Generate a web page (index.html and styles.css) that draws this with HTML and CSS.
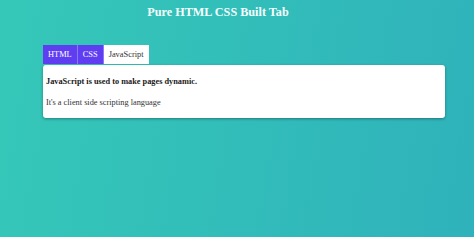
FILE: index.html
```html
<!DOCTYPE html>
<html lang="en">
<head>
  <meta charset="UTF-8" />
  <meta name="viewport" content="width=device-width, initial-scale=1.0" />
  <title>Pure HTML CSS Built Tab</title>
  <link rel="stylesheet" href="styles.css">
</head>
<body>
  <h1 class="titulo">Pure HTML CSS Built Tab</h1>

  <div class="tabs">
    <input type="radio" name="tab" id="tab-html">
    <label for="tab-html">HTML</label>
    <input type="radio" name="tab" id="tab-css">
    <label for="tab-css">CSS</label>
    <input type="radio" name="tab" id="tab-js" checked>
    <label for="tab-js">JavaScript</label>

    <div class="panel" id="panel-html">
      <p><strong>HTML is used to structure pages.</strong></p>
      <p>It's a markup language</p>
    </div>
    <div class="panel" id="panel-css">
      <p><strong>CSS is used to style pages.</strong></p>
      <p>It's a style sheet language</p>
    </div>
    <div class="panel" id="panel-js">
      <p><strong>JavaScript is used to make pages dynamic.</strong></p>
      <p>It's a client side scripting language</p>
    </div>
  </div>
</body>
</html>
```

FILE: styles.css
```css
:root {
  --purple: #5f3ef2;
  --white: #ffffff;
  --text: #1a1a1a;
}

* {
  box-sizing: border-box;
  margin: 0;
  padding: 0;
  font-family: 'Liberation Serif', 'Times New Roman', serif;
}

body {
  min-height: 237px;
  background: linear-gradient(100deg, #35c8b8, #2fb2bb);
  color: var(--text);
}

.titulo {
  padding: 5px 38px 0 0;
  text-align: center;
  font-size: 12.2px;
  line-height: 14px;
  color: #f4fffd;
}

.tabs {
  display: flex;
  flex-wrap: wrap;
  row-gap: 1px;
  width: 402px;
  margin: 26px 0 0 43px;
}

.tabs input {
  display: none;
}

.tabs label {
  height: 19px;
  padding: 0 5px;
  line-height: 19px;
  font-size: 8.4px;
  background: var(--purple);
  color: var(--white);
  border-right: 1px solid rgba(255, 255, 255, 0.3);
  cursor: pointer;
}

.tabs input:checked + label {
  background: var(--white);
  color: #333;
  border-right: none;
}

.panel {
  display: none;
  order: 1;
  width: 100%;
  padding: 12px 3px 10px;
  background: var(--white);
  border-radius: 3px;
  box-shadow: 0 1px 3px rgba(0, 0, 0, 0.35);
  font-size: 8.3px;
  line-height: 10px;
}

.panel p {
  color: #333;
}

.panel p strong {
  color: var(--text);
}

.panel p:first-child {
  margin-bottom: 11px;
}

#tab-html:checked ~ #panel-html,
#tab-css:checked ~ #panel-css,
#tab-js:checked ~ #panel-js {
  display: block;
}
```
